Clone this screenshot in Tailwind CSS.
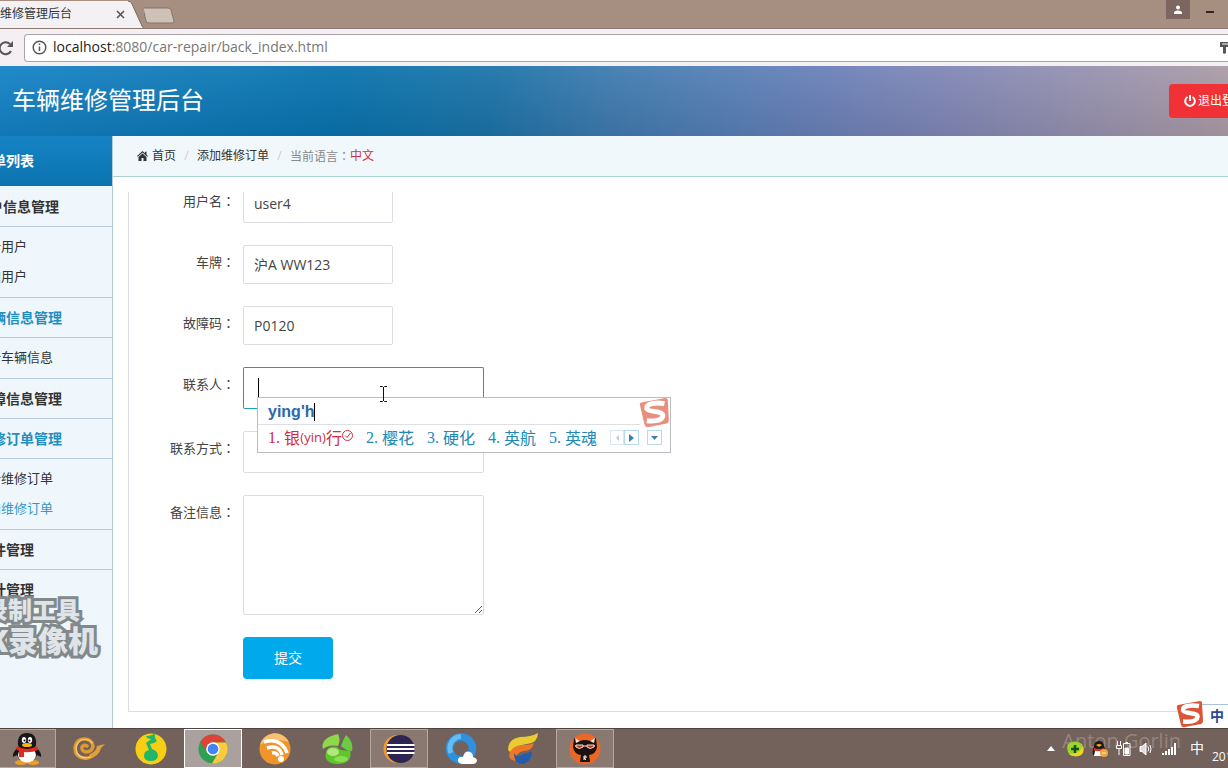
<!DOCTYPE html>
<html lang="zh-CN">
<head>
    <meta charset="UTF-8">
    <meta name="viewport" content="width=device-width, initial-scale=1.0">
    <title>车辆维修管理后台</title>
    <script src="https://cdn.jsdelivr.net/npm/@tailwindcss/browser@4"></script>
</head>
<body class="h-screen overflow-hidden flex flex-col bg-white text-[#333] font-['Open_Sans','Noto_Sans_CJK_SC',sans-serif]">
    <svg class="hidden">
        <symbol id="sogou" viewBox="0 0 28 28">
            <path d="M2 5 L24 1 Q26 1 26 3 L27 21 Q27 23 25 24 L9 27 Q6 28 5 25 L1 8 Q0 6 2 5Z" fill="currentColor"/>
            <path d="M23 6 C15 4.500 6 6 7 10.500 C8 14 22 12 21.500 17 C21 21.500 13 22 7 21.500" fill="none" stroke="#fff" stroke-width="4.500"/>
        </symbol>
    </svg>

    <!-- Browser tabs -->
    <div class="h-7 shrink-0 flex justify-between bg-[#a68f80] overflow-hidden">
        <div class="flex">
            <div class="relative w-36 h-7 flex items-center text-xs text-[#333]">
                <svg class="absolute inset-0" width="144" height="28" viewBox="0 0 144 28"><path d="M0 1 H128 Q131 1 132 4 L142 26 Q143 28 144 28 H0Z" fill="#f4f1f4"/><path d="M128 1 Q131 1 132 4 L142 26 Q143 28 144 28" fill="none" stroke="#7c695e"/></svg>
                <span class="relative -ml-6 w-36 whitespace-nowrap">车辆维修管理后台</span>
                <button class="relative -ml-1" aria-label="关闭"><svg width="9" height="9" viewBox="0 0 9 9"><path d="M1 1 8 8M8 1 1 8" stroke="#555" stroke-width="1.600"/></svg></button>
            </div>
            <svg class="mt-1.5" width="34" height="18" viewBox="0 0 34 18"><path d="M0 2 H25 Q27 2 28 4 L31 15 Q31 17 29 17 H6 Q4 17 3 15Z" transform="translate(-1)" fill="#cfc1b8" stroke="#85746a"/></svg>
        </div>
        <div class="flex gap-4 pr-3.5">
            <button class="w-6 h-[19px] bg-[#7d6660] flex justify-center items-center" aria-label="用户"><svg width="10" height="10" viewBox="0 0 10 10" fill="#fff"><circle cx="5" cy="2.500" r="2"/><path d="M1 9 V8 Q1 5.500 5 5.500 T9 8 V9Z"/></svg></button>
            <button class="w-2 h-6 flex items-center" aria-label="最小化"><span class="w-2 h-0.5 bg-[#3c2222]"></span></button>
        </div>
    </div>

    <!-- Address bar -->
    <div class="h-[38px] shrink-0 flex items-center gap-2.5 bg-[#f3eff2] border-t border-[#8b7970] overflow-hidden">
        <button class="w-3.5 h-4 overflow-hidden" aria-label="刷新"><svg width="14" height="16" viewBox="0 0 14 16" fill="none" stroke="#555" stroke-width="2"><path d="M10 4 A6 6 0 1 0 11 11"/><path d="M13 1 V7 H7Z" fill="#555" stroke="none"/></svg></button>
        <div class="flex-1 h-7 flex items-center gap-1.5 pl-[7px] bg-white border border-r-0 border-[#a9a2a4] rounded-l-sm">
            <svg width="15" height="15" viewBox="0 0 15 15" fill="none" stroke="#555" stroke-width="1.500"><circle cx="7.500" cy="7.500" r="6.300"/><path d="M7.500 6.500 V11M7.500 3.500 V5"/></svg>
            <p class="flex-1 pb-0.5 text-sm text-[#777]"><span class="text-[#222]">localhost</span>:8080/car-repair/back_index.html</p>
            <svg width="8" height="14" viewBox="0 0 8 14"><path d="M0 1 H10 V6 H6 V12 L4 13 L3 12 V6 H0Z" fill="#555"/><path d="M2 3 H8" stroke="#fff"/></svg>
        </div>
    </div>

    <!-- Page header -->
    <header class="h-[70px] shrink-0 flex items-center justify-between pl-3 overflow-hidden bg-[linear-gradient(to_bottom,#ffffff10,#00000014),linear-gradient(96deg,#1482c6_0%,#0f7ab8_14%,#0873ae_28%,#1b73a8_40%,#3f7bb0_50%,#567fb6_59%,#6a80b8_67%,#7e86b6_76%,#9490b0_87%,#ac9ca6_100%)]">
        <h1 class="pb-0.5 text-2xl text-white">车辆维修管理后台</h1>
        <button class="w-[91px] h-[34px] -mr-8 pl-[15px] flex items-center gap-0.5 rounded bg-[#f03236] text-white text-xs whitespace-nowrap">
            <svg width="12" height="12" viewBox="0 0 12 12" fill="none" stroke="#fff" stroke-width="2"><path d="M3.500 2 A4.800 4.800 0 1 0 8.500 2M6 0 V6"/></svg>退出登录
        </button>
    </header>

    <div class="flex-1 min-h-0 flex">
        <!-- Sidebar -->
        <aside class="relative w-[113px] shrink-0 overflow-hidden border-r border-[#b3cbd6] bg-[#f0f7fc]">
            <nav class="-ml-12 whitespace-nowrap text-[13px]">
                <h2 class="h-[50px] pl-[26px] flex items-center text-sm font-bold text-white bg-linear-to-b from-[#1583c4] to-[#0b74b0]">菜单列表</h2>
                <h3 class="h-10 mt-px pl-[23px] flex items-center text-sm font-bold border-b border-[#b3cbdc]">用户信息管理</h3>
                <ul class="pt-1 pb-1.5 pl-[23px] leading-[30px] border-b border-[#b3cbdc]">
                    <li><a href="#">统计用户</a></li>
                    <li><a href="#">添加用户</a></li>
                </ul>
                <h3 class="h-10 pl-[26px] flex items-center text-sm font-bold text-[#1e8fc0] border-b border-[#b3cbdc]">车辆信息管理</h3>
                <ul class="pt-1 pb-1.5 pl-[23px] leading-[30px] border-b border-[#b3cbdc]">
                    <li><a href="#">统计车辆信息</a></li>
                </ul>
                <h3 class="h-10 pl-[26px] flex items-center text-sm font-bold border-b border-[#b3cbdc]">故障信息管理</h3>
                <h3 class="h-10 pl-[26px] flex items-center text-sm font-bold text-[#1e8fc0] border-b border-[#b3cbdc]">维修订单管理</h3>
                <ul class="pt-1 pb-1.5 pl-[23px] leading-[30px] border-b border-[#b3cbdc]">
                    <li><a href="#">统计维修订单</a></li>
                    <li><a href="#" class="text-[#3598c4]">添加维修订单</a></li>
                </ul>
                <h3 class="h-10 pl-[26px] flex items-center text-sm font-bold border-b border-[#b3cbdc]">配件管理</h3>
                <h3 class="h-10 pl-[26px] flex items-center text-sm font-bold">统计管理</h3>
            </nav>
            <!-- Recorder watermark -->
            <div class="absolute right-3 top-[459px] whitespace-nowrap font-black text-[#dfe4e8] text-right [-webkit-text-stroke:6px_#82898b] [paint-order:stroke_fill]">
                <p class="pr-5 text-2xl leading-[30px]">屏幕录制工具</p>
                <p class="pr-0.5 text-3xl leading-8">KK录像机</p>
            </div>
        </aside>

        <main class="flex-1 min-w-0 flex flex-col">
            <nav class="h-[41px] shrink-0 pl-6 flex items-center text-xs bg-[#f0f8fc] border-b border-[#a9d3d3]">
                <svg class="mr-1" width="11" height="10" viewBox="0 0 11 10" fill="#333"><path d="M5.500 0 L8 2.200 V.8 H9.500 V3.500 L11 5 L10.300 5.700 L5.500 1.500 L.7 5.700 L0 5Z"/><path d="M5.500 2.500 L9.500 6 V10 H6.500 V7 H4.500 V10 H1.500 V6Z"/></svg>
                <a href="#">首页</a>
                <span class="w-[21px] text-center text-[#ccc]">/</span>
                <a href="#">添加维修订单</a>
                <span class="w-[21px] text-center text-[#ccc]">/</span>
                <span class="text-[#888]">当前语言<span lang="zh-TW" class="font-['Noto_Sans_CJK_TC']">：</span></span>
                <a href="#" class="text-[#cc3340]">中文</a>
            </nav>
            <div class="mt-[15px] ml-[15px] min-h-0 overflow-hidden">
                <form class="-mt-2 pb-8 border-l border-b border-[#dcdce2] grid grid-cols-[106px_1fr] gap-x-2 gap-y-[22px] justify-items-start text-[13px] text-[#444]">
                    <label for="user" class="justify-self-end leading-[34px]">用户名<span lang="zh-TW" class="font-['Noto_Sans_CJK_TC']">：</span></label>
                    <input id="user" value="user4" class="w-[150px] h-[39px] px-2.5 text-sm border border-[#dcdce2] rounded-xs">

                    <label for="plate" class="justify-self-end leading-[34px]">车牌<span lang="zh-TW" class="font-['Noto_Sans_CJK_TC']">：</span></label>
                    <input id="plate" value="沪A WW123" class="w-[150px] h-[39px] px-2.5 pb-0.5 text-sm border border-[#dcdce2] rounded-xs">

                    <label for="code" class="justify-self-end leading-[34px]">故障码<span lang="zh-TW" class="font-['Noto_Sans_CJK_TC']">：</span></label>
                    <input id="code" value="P0120" class="w-[150px] h-[39px] px-2.5 text-sm border border-[#dcdce2] rounded-xs">

                    <label for="contact" class="justify-self-end leading-[34px]">联系人<span lang="zh-TW" class="font-['Noto_Sans_CJK_TC']">：</span></label>
                    <div class="relative">
                        <input id="contact" class="block w-[241px] h-[42px] px-2.5 text-sm border border-[#77777c] border-b-[#20a0b0] rounded-xs">
                        <span class="absolute left-[15px] top-[11px] w-px h-5 bg-black"></span>
                        <!-- Mouse pointer -->
                        <svg class="absolute left-[136px] top-[19px] z-10" width="9" height="16" viewBox="0 0 9 16"><path d="M1 .5 H3.500 L4.500 1.500 L5.500 .5 H8M4.500 1 V15M1 15.500 H3.500 L4.500 14.500 L5.500 15.500 H8" fill="none" stroke="#111"/></svg>
                        <!-- Input method candidates -->
                        <div class="absolute left-3.5 top-[30px] w-[414px] h-14 bg-white border border-[#b9bcc4] whitespace-nowrap">
                            <div class="h-[27px] w-[382px] pl-2.5 pt-px flex items-center border-b border-[#dfe0e4] font-['Liberation_Sans',sans-serif] text-base font-bold text-[#2a68a8]">ying'h<span class="w-px h-[18px] bg-black"></span></div>
                            <svg class="absolute -top-px right-0 text-[#e98f7d]" width="31" height="31"><use href="#sogou"/></svg>
                            <div class="h-[27px] pl-2.5 pb-0.5 flex items-center gap-[13px] text-base text-[#2089b4]">
                                <span class="flex items-center text-[#d22b3c]"><span class="w-4 font-['Liberation_Serif',serif]">1.</span>银<span class="w-[26px] text-center text-[13px]">(yin)</span>行<svg class="-mt-1" width="11" height="11" viewBox="0 0 11 11" fill="none" stroke="#d22b3c"><circle cx="5.500" cy="5.500" r="5"/><path d="M3 5.500 5 7.500 8.500 3"/></svg></span>
                                <span class="flex"><span class="w-4 font-['Liberation_Serif',serif]">2.</span>樱花</span>
                                <span class="flex"><span class="w-4 font-['Liberation_Serif',serif]">3.</span>硬化</span>
                                <span class="flex"><span class="w-4 font-['Liberation_Serif',serif]">4.</span>英航</span>
                                <span class="flex"><span class="w-4 font-['Liberation_Serif',serif]">5.</span>英魂</span>
                                <span class="flex">
                                    <button type="button" class="w-3.5 h-[15px] border border-[#d9e8f0] flex items-center justify-center" aria-label="上一页"><svg width="4" height="6"><path d="M4 0 V6 L1 3Z" fill="#c4ccd4"/></svg></button>
                                    <button type="button" class="w-[15px] h-[15px] border border-[#b9d9ea] flex items-center justify-center" aria-label="下一页"><svg width="5" height="8"><path d="M0 0 V8 L5 4Z" fill="#3a7fae"/></svg></button>
                                    <button type="button" class="ml-2 w-[15px] h-[15px] border border-[#b9d9ea] flex items-center justify-center" aria-label="更多"><svg width="7" height="4"><path d="M0 0 H7 L3.500 4Z" fill="#3a7fae"/></svg></button>
                                </span>
                            </div>
                        </div>
                    </div>

                    <label for="phone" class="justify-self-end leading-[34px]">联系方式<span lang="zh-TW" class="font-['Noto_Sans_CJK_TC']">：</span></label>
                    <input id="phone" class="w-[241px] h-[42px] px-2.5 text-sm border border-[#dcdce2] rounded-xs">

                    <label for="remark" class="justify-self-end leading-[34px]">备注信息<span lang="zh-TW" class="font-['Noto_Sans_CJK_TC']">：</span></label>
                    <textarea id="remark" class="block w-[241px] h-[120px] p-2.5 text-sm border border-[#dcdce2] rounded-xs"></textarea>

                    <button class="col-start-2 w-[90px] h-[42px] rounded-sm bg-[#00a8ec] text-sm text-white">提交</button>
                </form>
            </div>
        </main>
    </div>

    <!-- Input method bar -->
    <div class="absolute right-0 bottom-10 flex items-end">
        <svg class="text-[#dc5436] z-10" width="28" height="28"><use href="#sogou"/></svg>
        <span class="-ml-1 w-7 h-6 pl-2.5 border-t border-[#a9c3dc] bg-white text-sm leading-[22px] font-bold text-[#2c4a8c]">中</span>
    </div>

    <!-- Taskbar -->
    <footer class="relative h-10 shrink-0 flex justify-between bg-[#73625b] border-t border-[#50443f] overflow-hidden">
        <div class="-ml-0.5 flex gap-1">
            <button class="w-[58px] flex items-center justify-center border border-[#b3a8a2] bg-[#897970]" aria-label="QQ">
                <svg width="30" height="32" viewBox="0 0 30 32"><ellipse cx="9" cy="29.500" rx="6" ry="2.500" fill="#f0a020"/><ellipse cx="21" cy="29.500" rx="6" ry="2.500" fill="#f0a020"/><path d="M6 14 Q0 20 1 24 L5 22 Q7 29 15 29 T25 22 L29 24 Q30 20 24 14Z" fill="#17171b"/><ellipse cx="15" cy="22" rx="9" ry="7.500" fill="#fff"/><path d="M6 12 Q5 0 15 0 T24 12 Q23 17 15 17 T6 12Z" fill="#17171b"/><ellipse cx="12" cy="7" rx="2.200" ry="3" fill="#fff"/><ellipse cx="18" cy="7" rx="2.200" ry="3" fill="#fff"/><circle cx="12.500" cy="7.500" r="1"/><circle cx="17.500" cy="7.500" r="1"/><ellipse cx="15" cy="12" rx="5" ry="2" fill="#f6b31c"/><path d="M5 13 Q15 19 25 13 L26 17 Q19 20 12 19 V24 H7 V18 L4 16Z" fill="#e02b20"/></svg>
            </button>
            <button class="w-[58px] flex items-center justify-center" aria-label="UC">
                <svg width="32" height="24" viewBox="0 0 32 24" fill="none" stroke-linecap="round"><path d="M21 17 Q17 22 11 21 Q2 20 2 11 Q3 2 11 2 Q19 2 20 9 Q19 15 13 15 Q8 14 9 10 Q11 7 14 9" stroke="#dc9a32" stroke-width="3.500"/><path d="M15 22 Q26 20 28 11 L32 7 L24 9 Q23 15 17 17Z" fill="#e0a03a"/><path d="M17 20 Q9 23 4 16 Q1 8 8 3 Q15 1 19 6" stroke="#f6cc7a" stroke-width="1.300"/></svg>
            </button>
            <button class="w-[58px] flex items-center justify-center" aria-label="QQ音乐">
                <svg width="32" height="32" viewBox="0 0 32 32"><circle cx="16" cy="16" r="15.500" fill="#f8ce14"/><path d="M11 3 Q17 3 20 0 Q19 4 22 8 Q19 11 15 11 L17 16 Q23 18 23 23 Q22 28 16 28 Q9 28 9 23 Q9 18 14 17 L11 10 Q14 8 16 6 Q12 6 11 3Z" fill="#22b668"/></svg>
            </button>
            <button class="w-[58px] flex items-center justify-center border border-white bg-[#aaa19e]" aria-label="Chrome">
                <svg width="30" height="30" viewBox="0 0 30 30"><circle cx="15" cy="15" r="14.500" fill="#2f9f52"/><path d="M2.400 7.700 A14.500 14.500 0 0 1 28 8.500 H15 A6.500 6.500 0 0 0 9.400 18.200Z" fill="#dc4437"/><path d="M28 8.500 A14.500 14.500 0 0 1 14 29.500 L20.600 18.200 A6.500 6.500 0 0 0 15 8.500Z" fill="#fbcb3c"/><circle cx="15" cy="15" r="6.800" fill="#fff"/><circle cx="15" cy="15" r="5.300" fill="#4285f4"/></svg>
            </button>
            <button class="w-[58px] flex items-center justify-center" aria-label="WiFi">
                <svg width="32" height="32" viewBox="0 0 32 32" fill="none" stroke="#fff" stroke-width="3.500"><circle cx="16" cy="16" r="15.500" fill="#f0952a" stroke="none"/><path d="M1 12 A15.500 15.500 0 0 1 30 9 Q14 4 1 12Z" fill="#f8c070" stroke="none"/><path d="M5 9 Q22 4 28 20M8 15 Q20 11 23 22M13 20 Q17 19 19 23"/><circle cx="22" cy="26" r="3" fill="#fff" stroke="none"/></svg>
            </button>
            <button class="w-[58px] flex items-center justify-center" aria-label="绿色浏览器">
                <svg width="32" height="30" viewBox="0 0 32 30"><path d="M2 15 Q-1 4 17 0 Q20 6 17 12 Q8 10 2 15Z" fill="#8ed84a"/><path d="M20 12 Q22 6 25 1 Q33 8 31 17 Q25 17 20 12Z" fill="#6cca44"/><path d="M5 18 Q8 11 16 13 Q20 18 29 16 Q32 29 18 30 Q2 30 5 18Z" fill="#5fc62c"/><ellipse cx="12" cy="18" rx="6" ry="4" fill="#c5f090" opacity=".8"/><ellipse cx="20" cy="25" rx="7" ry="3" fill="#a8ec70" opacity=".6"/></svg>
            </button>
            <button class="w-[58px] flex items-center justify-center border border-[#b3a8a2] bg-[#897970]" aria-label="Eclipse">
                <svg width="32" height="30" viewBox="0 0 32 30"><circle cx="14.500" cy="15" r="14" fill="#ef9a38"/><circle cx="17.500" cy="15" r="14" fill="#2e2453"/><path d="M4 11H31.500M4 15H31.500M4 19H31.500" stroke="#fff" stroke-width="1.800"/></svg>
            </button>
            <button class="w-[58px] flex items-center justify-center" aria-label="QQ浏览器">
                <svg width="32" height="32" viewBox="0 0 32 32"><circle cx="16" cy="15.500" r="11.500" fill="none" stroke="#2d91df" stroke-width="7.500"/><path d="M6 20 A11.500 11.500 0 0 1 16 3.500" fill="none" stroke="#65bdf2" stroke-width="5"/><path d="M17 31 Q12 30 13 26 Q15 23 18 24 Q20 17 25 19 Q28 20 28 24 Q32 25 32 28 Q31 31 28 31Z" fill="#fff"/></svg>
            </button>
            <button class="w-[58px] flex items-center justify-center" aria-label="Flash">
                <svg width="32" height="32" viewBox="0 0 32 32"><path d="M1 17 Q1 6 13 4 Q24 4 31 0 Q31 10 20 11 Q9 12 4 20Z" fill="#e8cc32"/><path d="M2 23 Q3 13 15 12 Q23 12 27 10 Q25 18 17 18 Q9 19 8 28 Q3 27 2 23Z" fill="#ed7628"/><path d="M7 20 Q10 26 16 21 Q22 20 25 18 Q25 29 16 31 Q7 31 7 20Z" fill="#245cad"/></svg>
            </button>
            <button class="w-[58px] flex items-center justify-center border border-[#b3a8a2] bg-[#897970]" aria-label="录像机">
                <svg width="32" height="32" viewBox="0 0 32 32"><circle cx="16" cy="16" r="15.500" fill="#ea6725"/><path d="M5 5 L11 8 Q16 6 21 8 L27 5 L28 14 Q27 21 20 22 L21 29 H11 L12 22 Q5 21 4 14Z" fill="#1c1211"/><path d="M6 5 L11 8 L7 10ZM26 5 L21 8 L25 10Z" fill="#f7e5da"/><path d="M6 13 H26" stroke="#f5ddd0"/><path d="M7 12 H14 V14 Q10 17 7 14ZM18 12 H25 V14 Q21 17 18 14Z" fill="#b93424" stroke="#f5ddd0"/><path d="M15 27 V23 H17 V25 H15 L17 27" stroke="#fff" fill="none"/></svg>
            </button>
        </div>
        <p class="absolute right-[47px] -top-1 text-xl leading-8 text-[#94857d]">Anton Gorlin</p>
        <div class="relative flex items-center gap-2 text-white">
            <svg class="mr-1" width="8" height="5"><path d="M0 5 L4 0 L8 5Z" fill="#fff"/></svg>
            <svg width="17" height="16" viewBox="0 0 17 16"><path d="M1 3 Q8 -2 15 3 Q18 9 14 14 Q7 17 2 13 Q-1 8 1 3Z" fill="#9bd629"/><path d="M2 13 Q12 14 16 5 Q18 11 14 14 Q7 17 2 13Z" fill="#f2d422"/><path d="M8 4 V12M4 8 H12" stroke="#174f19" stroke-width="2.500"/></svg>
            <svg width="16" height="16" viewBox="0 0 16 16"><path d="M2 6 Q2 0 7 0 T12 6 Q14 9 13 14 H1 Q0 9 2 6Z" fill="#1d1716"/><path d="M2 7 Q7 9 12 7 V10 H2Z" fill="#e23426"/><path d="M4 4 Q7 2 10 4 L7 6Z" fill="#f4a42c"/><path d="M3 10 H9 V15 H2Z" fill="#fff"/><circle cx="12" cy="12" r="4" fill="#f0a63a"/><path d="M10 12 H14" stroke="#fff"/></svg>
            <svg width="15" height="15" viewBox="0 0 15 15" fill="none" stroke="#fff"><path d="M1.500 0 V4M4.500 0 V4M.5 4.500 H5.500 V7.500 H.5ZM3 8 V14"/><path d="M7.500 2.500 H14 V14.500 H7.500ZM9.500 1.500 H12"/><path d="M9 7 H12.500 V13 H9Z" fill="#fff"/></svg>
            <svg width="15" height="14" viewBox="0 0 15 14" fill="none" stroke="#fff"><path d="M1 4.500 H3 L7 1 V13 L3 9.500 H1Z" fill="#ddd"/><path d="M9 4.500 Q10.500 7 9 9.500M11 3 Q13 7 11 11"/></svg>
            <svg width="16" height="12" viewBox="0 0 16 12" fill="#fff"><path d="M0 10H2V12H0ZM3 8H5V12H3ZM6 6H8V12H6ZM9 4H11V12H9ZM12 0H14V12H12Z"/></svg>
            <span class="w-[18px] pl-1 pb-0.5 text-sm leading-5">中</span>
            <span class="w-4 mt-4 text-xs whitespace-nowrap">2017</span>
        </div>
    </footer>
</body>
</html>
